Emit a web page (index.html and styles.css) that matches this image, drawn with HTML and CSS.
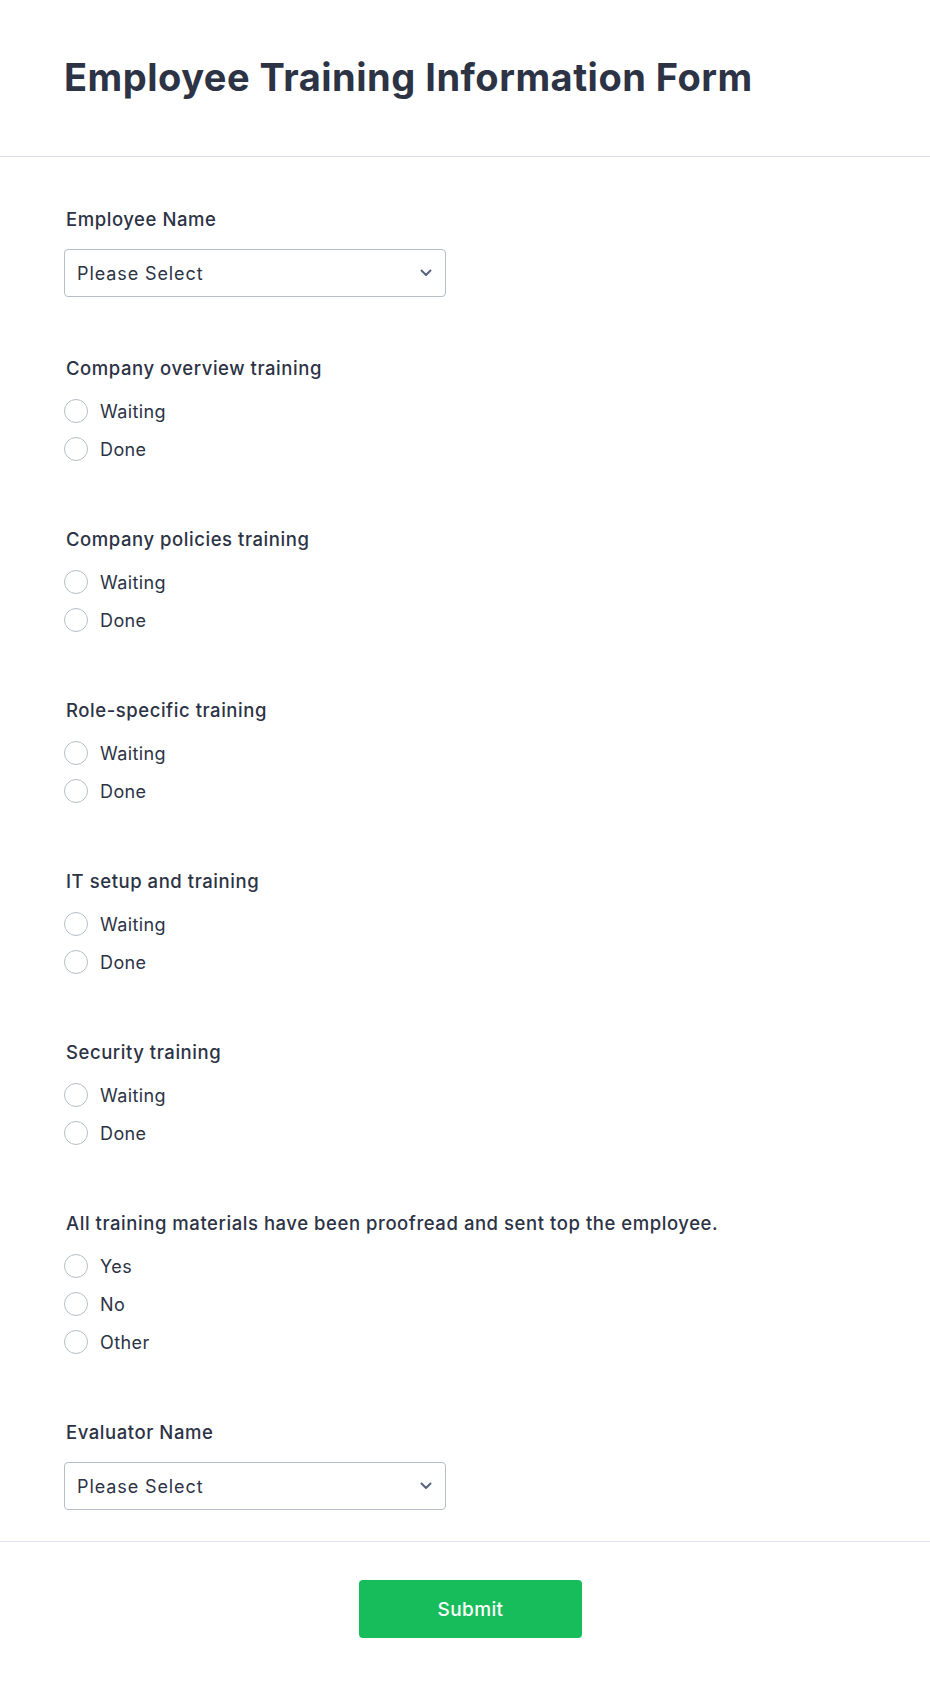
FILE: index.html
```html
<!DOCTYPE html>
<html lang="en">
<head>
  <meta charset="UTF-8">
  <title>Employee Training Information Form</title>
  <link rel="stylesheet" href="styles.css">
</head>
<body>
  <header class="form-header">
    <h1>Employee Training Information Form</h1>
  </header>

  <form class="form-body">
    <div class="field">
      <label class="field-label">Employee Name</label>
      <div class="select">
        <span>Please Select</span>
        <svg class="chevron" width="12" height="8" viewBox="0 0 12 8"><path d="M1.5 1.5 L6 6 L10.5 1.5" fill="none" stroke="#57647e" stroke-width="2" stroke-linecap="round" stroke-linejoin="round"/></svg>
      </div>
    </div>

    <div class="field">
      <span class="field-label">Company overview training</span>
      <div class="options">
        <label class="option"><span class="radio"></span>Waiting</label>
        <label class="option"><span class="radio"></span>Done</label>
      </div>
    </div>

    <div class="field">
      <span class="field-label">Company policies training</span>
      <div class="options">
        <label class="option"><span class="radio"></span>Waiting</label>
        <label class="option"><span class="radio"></span>Done</label>
      </div>
    </div>

    <div class="field">
      <span class="field-label">Role-specific training</span>
      <div class="options">
        <label class="option"><span class="radio"></span>Waiting</label>
        <label class="option"><span class="radio"></span>Done</label>
      </div>
    </div>

    <div class="field">
      <span class="field-label">IT setup and training</span>
      <div class="options">
        <label class="option"><span class="radio"></span>Waiting</label>
        <label class="option"><span class="radio"></span>Done</label>
      </div>
    </div>

    <div class="field">
      <span class="field-label">Security training</span>
      <div class="options">
        <label class="option"><span class="radio"></span>Waiting</label>
        <label class="option"><span class="radio"></span>Done</label>
      </div>
    </div>

    <div class="field">
      <span class="field-label">All training materials have been proofread and sent top the employee.</span>
      <div class="options">
        <label class="option"><span class="radio"></span>Yes</label>
        <label class="option"><span class="radio"></span>No</label>
        <label class="option"><span class="radio"></span>Other</label>
      </div>
    </div>

    <div class="field last">
      <label class="field-label">Evaluator Name</label>
      <div class="select">
        <span>Please Select</span>
        <svg class="chevron" width="12" height="8" viewBox="0 0 12 8"><path d="M1.5 1.5 L6 6 L10.5 1.5" fill="none" stroke="#57647e" stroke-width="2" stroke-linecap="round" stroke-linejoin="round"/></svg>
      </div>
    </div>
  </form>

  <footer class="form-footer">
    <button type="button" class="submit">Submit</button>
  </footer>
</body>
</html>
```

FILE: styles.css
```css
body {
  margin: 0;
  padding: 0;
  background: #ffffff;
  font-family: Inter, 'Noto Sans', sans-serif;
  color: #2c3345;
}

.form-header {
  padding: 54px 64px 56px;
  border-bottom: 1px solid #dcdfe8;
}

.form-header h1 {
  margin: 0;
  font-size: 38px;
  line-height: 46px;
  font-weight: 700;
  letter-spacing: 0.5px;
}

.form-body {
  padding: 50px 64px 0;
}

.field {
  margin-bottom: 59px;
}

.field.last {
  margin-bottom: 31px;
}

.field-label {
  display: block;
  font-size: 18.5px;
  line-height: 24px;
  font-weight: 500;
  letter-spacing: 0.55px;
  margin-left: 2px;
}

.select {
  margin-top: 18px;
  width: 382px;
  height: 48px;
  box-sizing: border-box;
  border: 1px solid #b8bdc9;
  border-radius: 4px;
  padding: 0 13px 0 12px;
  display: flex;
  align-items: center;
  justify-content: space-between;
  font-size: 18px;
  letter-spacing: 0.9px;
}

.options {
  margin-top: 12px;
  display: flex;
  flex-direction: column;
}

.option {
  height: 38px;
  display: flex;
  align-items: center;
  gap: 12px;
  font-size: 18px;
  letter-spacing: 0.4px;
}

.radio {
  width: 24px;
  height: 24px;
  box-sizing: border-box;
  border: 1px solid #b8bdc9;
  border-radius: 50%;
  flex-shrink: 0;
}

.form-footer {
  border-top: 1px solid #e3e4f4;
  padding: 38px 0 51px 11px;
  display: flex;
  justify-content: center;
}

.submit {
  width: 223px;
  height: 58px;
  border: none;
  border-radius: 4px;
  background: #18bd5b;
  color: #ffffff;
  font-family: Inter, 'Noto Sans', sans-serif;
  font-size: 19px;
  font-weight: 500;
  letter-spacing: 0.4px;
}
```
